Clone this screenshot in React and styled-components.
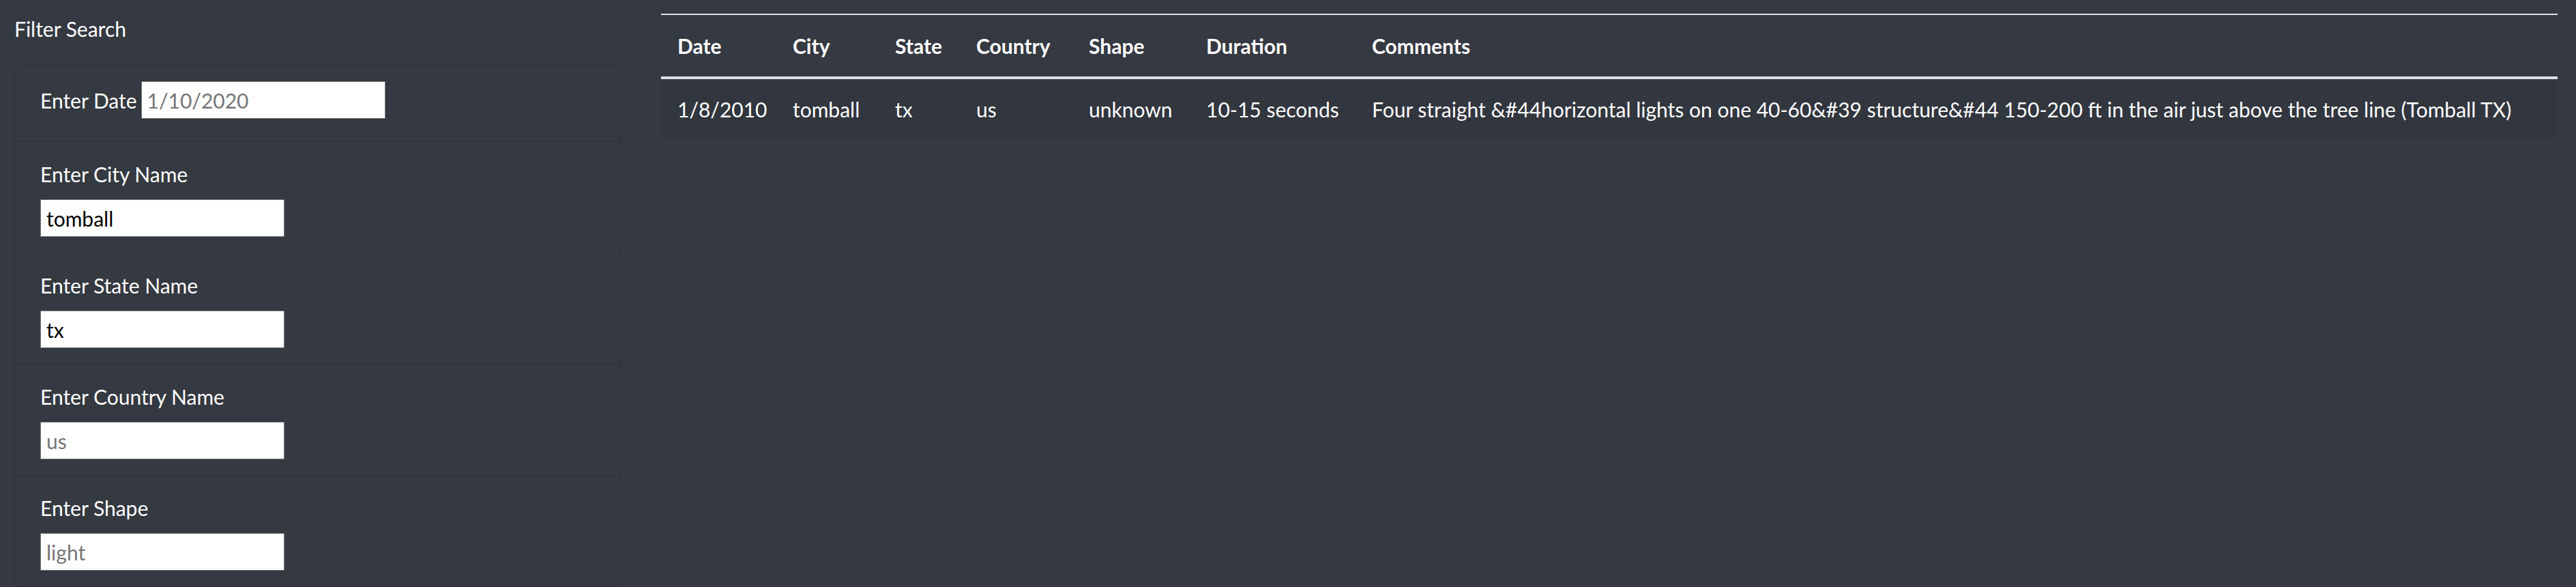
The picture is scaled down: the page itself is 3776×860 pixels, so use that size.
import React from "react";
import styled, { createGlobalStyle } from "styled-components";

const GlobalStyle = createGlobalStyle`
  html, body { margin: 0; padding: 0; background: #353941; }
  body {
    font-family: "Lato", "Liberation Sans", sans-serif;
    font-size: 30px;
    color: #ffffff;
  }
  * { box-sizing: border-box; }
`;

const Page = styled.div`
  display: flex;
  align-items: flex-start;
  gap: 58px;
  min-height: 860px;
  background: #353941;
`;

const Sidebar = styled.aside`
  flex: none;
  width: 911px;
  padding: 24px 0 0 20px;
`;

const Title = styled.h5`
  margin: 0 0 36px 1px;
  font-size: 30px;
  font-weight: 400;
  line-height: 36px;
  color: #ffffff;
`;

const Card = styled.ul`
  list-style: none;
  margin: 0;
  padding: 0;
  width: 891px;
  border: 1px solid #2c3037;
  border-radius: 8px;
`;

const Item = styled.li`
  display: flex;
  flex-direction: ${p => (p.$inline ? "row" : "column")};
  align-items: ${p => (p.$inline ? "center" : "flex-start")};
  gap: ${p => (p.$inline ? "6px" : "19px")};
  padding: ${p => (p.$inline ? "22px 38px 33px" : "29px 38px 23px")};
  border-top: ${p => (p.$first ? "none" : "1px solid #2c3037")};
`;

const Label = styled.label`
  font-size: 30px;
  line-height: 36px;
  color: #ffffff;
`;

const Input = styled.input`
  width: 358px;
  height: 55px;
  margin: 0;
  padding: 0 8px;
  border: 1px solid #767676;
  border-radius: 0;
  background: #ffffff;
  font-family: "Lato", "Liberation Sans", sans-serif;
  font-size: 30px;
  color: #000000;
  outline: none;
  &::placeholder {
    color: #757575;
    opacity: 1;
  }
`;

const Main = styled.main`
  flex: none;
  padding-top: 20px;
`;

const Table = styled.table`
  width: 2780px;
  table-layout: fixed;
  border-collapse: collapse;
  color: #ffffff;
`;

const Th = styled.th`
  padding: 24px;
  text-align: left;
  font-size: 30px;
  font-weight: 700;
  line-height: 42px;
  border-top: 2px solid #dee2e6;
  border-bottom: 4px solid #dee2e6;
  white-space: nowrap;
`;

const Row = styled.tr`
  background: #32363e;
`;

const Td = styled.td`
  padding: 24px;
  font-size: 30px;
  line-height: 40px;
  white-space: nowrap;
`;

const fields = [
  { label: "Enter Date", placeholder: "1/10/2020", inline: true },
  { label: "Enter City Name", value: "tomball" },
  { label: "Enter State Name", value: "tx" },
  { label: "Enter Country Name", placeholder: "us" },
  { label: "Enter Shape", placeholder: "light" },
];

const columns = [
  { name: "Date", width: 169 },
  { name: "City", width: 150 },
  { name: "State", width: 119 },
  { name: "Country", width: 165 },
  { name: "Shape", width: 172 },
  { name: "Duration", width: 243 },
  { name: "Comments", width: 1762 },
];

const rows = [
  [
    "1/8/2010",
    "tomball",
    "tx",
    "us",
    "unknown",
    "10-15 seconds",
    "Four straight &#44horizontal lights on one 40-60&#39 structure&#44 150-200 ft in the air just above the tree line (Tomball TX)",
  ],
];

export default function App() {
  return (
    <Page>
      <GlobalStyle />
      <Sidebar>
        <Title>Filter Search</Title>
        <Card>
          {fields.map((f, i) => (
            <Item key={f.label} $inline={f.inline} $first={i === 0}>
              <Label htmlFor={`f${i}`}>{f.label}</Label>
              <Input
                id={`f${i}`}
                type="text"
                placeholder={f.placeholder}
                defaultValue={f.value}
              />
            </Item>
          ))}
        </Card>
      </Sidebar>
      <Main>
        <Table>
          <colgroup>
            {columns.map(c => (
              <col key={c.name} width={c.width} />
            ))}
          </colgroup>
          <thead>
            <tr>
              {columns.map(c => (
                <Th key={c.name}>{c.name}</Th>
              ))}
            </tr>
          </thead>
          <tbody>
            {rows.map((r, i) => (
              <Row key={i}>
                {r.map((cell, j) => (
                  <Td key={j}>{cell}</Td>
                ))}
              </Row>
            ))}
          </tbody>
        </Table>
      </Main>
    </Page>
  );
}
